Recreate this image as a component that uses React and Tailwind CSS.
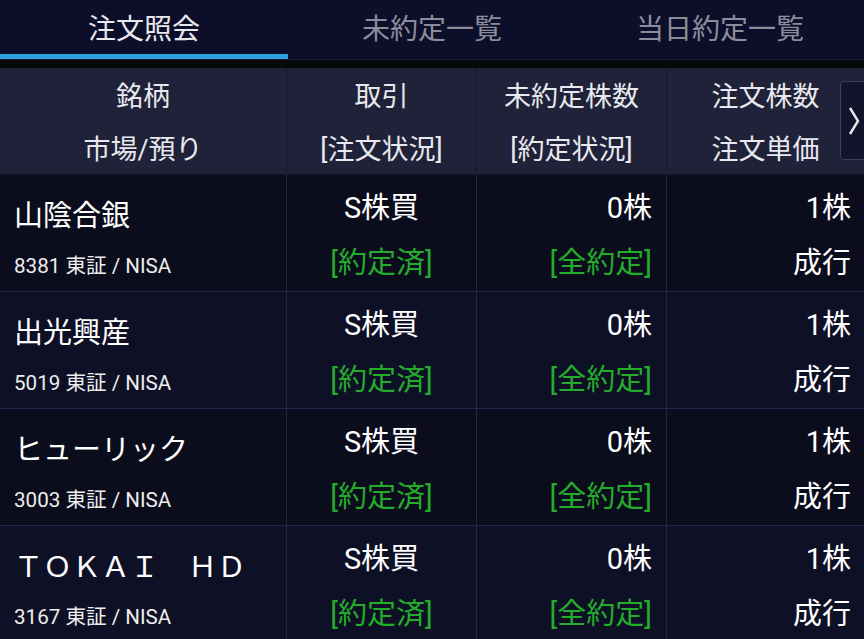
const rows = [
  { name: "山陰合銀", code: "8381" },
  { name: "出光興産", code: "5019" },
  { name: "ヒューリック", code: "3003" },
  { name: "ＴＯＫＡＩ　ＨＤ", code: "3167" },
];

const tabs = ["注文照会", "未約定一覧", "当日約定一覧"];

const font = { fontFamily: 'Roboto, "Noto Sans CJK JP", sans-serif' };

export default function App() {
  return (
    <div className="w-[864px] h-[639px] overflow-hidden bg-[#0b0c1c] text-white" style={font}>
      {/* Tabs */}
      <div className="flex h-[60px] bg-[#0d0e2a] border-b border-[#1a1b30]">
        {tabs.map((t, i) => (
          <div key={t} className="flex-1 flex flex-col">
            <div
              className={`flex-1 flex items-center justify-center text-[28px] pt-[6px] ${
                i === 0 ? "text-[#e8e8ee]" : "text-[#8c8d9c]"
              }`}
            >
              {t}
            </div>
            <div className={`h-[5px] ${i === 0 ? "bg-[#2d9fdc]" : ""}`} />
          </div>
        ))}
      </div>
      <div className="h-[8px] bg-[#08080b]" />

      {/* Header */}
      <div className="relative grid grid-cols-[286px_190px_190px_1fr] h-[107px] bg-[#1f2239] text-[27px] text-[#e8e8ee] border-b border-[#14162a]">
        <HeadCell a="銘柄" b="市場/預り" />
        <HeadCell a="取引" b="[注文状況]" border />
        <HeadCell a="未約定株数" b="[約定状況]" border />
        <HeadCell a="注文株数" b="注文単価" border />
        <div className="absolute right-[-6px] top-[13px] w-[30px] h-[79px] rounded-[4px] border border-[#3c3f58] bg-[#12142b] flex items-center pl-[7px]">
          <svg width="12" height="30" viewBox="0 0 12 30" fill="none" stroke="#e8e8ee" strokeWidth="2.4">
            <path d="M2 2 L10 15 L2 28" />
          </svg>
        </div>
      </div>

      {/* Rows */}
      {rows.map((r, i) => (
        <div
          key={r.code}
          className={`grid grid-cols-[286px_190px_190px_1fr] h-[117px] border-b border-[#23264a] ${
            i % 2 === 0 ? "bg-[#0b0c1c]" : "bg-[#0e1026]"
          }`}
        >
          <div className="flex flex-col pl-[14px] pt-[21px]">
            <div className="text-[29px] leading-[40px] text-white whitespace-nowrap">{r.name}</div>
            <div className="text-[20.6px] leading-[28px] mt-[16px] text-[#eeeeee]">
              {r.code} 東証 / NISA
            </div>
          </div>
          <div className="flex flex-col items-center pt-[13px] border-l border-[#23264a]">
            <div className="text-[29px] leading-[40px]">S株買</div>
            <div className="text-[29px] leading-[40px] mt-[15px] text-[#24ac2b]">[約定済]</div>
          </div>
          <div className="flex flex-col items-end pr-[14px] pt-[13px] border-l border-[#23264a]">
            <div className="text-[29px] leading-[40px]">0株</div>
            <div className="text-[29px] leading-[40px] mt-[15px] text-[#24ac2b]">[全約定]</div>
          </div>
          <div className="flex flex-col items-end pr-[13px] pt-[13px] border-l border-[#23264a]">
            <div className="text-[29px] leading-[40px]">1株</div>
            <div className="text-[29px] leading-[40px] mt-[15px]">成行</div>
          </div>
        </div>
      ))}
    </div>
  );
}

function HeadCell({ a, b, border }) {
  return (
    <div className={`flex flex-col items-center pt-[11px] ${border ? "border-l border-[#15172b]" : ""}`}>
      <div className="leading-[36px]">{a}</div>
      <div className="leading-[36px] mt-[17px]">{b}</div>
    </div>
  );
}
